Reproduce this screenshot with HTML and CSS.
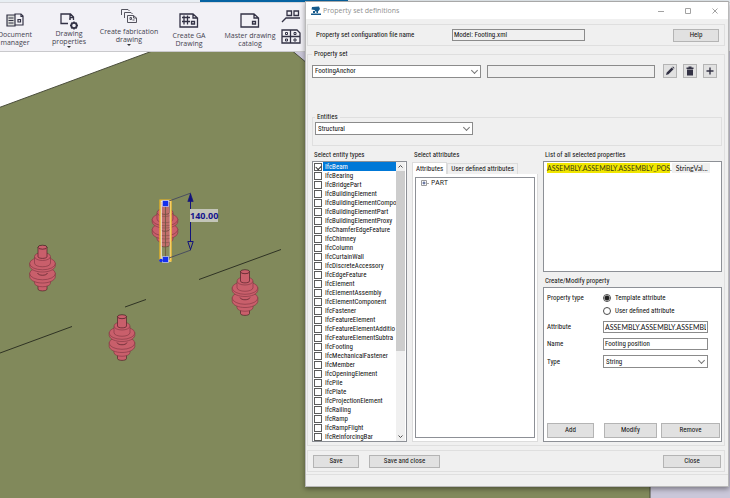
FILE: index.html
```html
<!DOCTYPE html>
<html lang="en">
<head>
<meta charset="utf-8">
<title>Property set definitions</title>
<link rel="stylesheet" href="styles.css">
</head>
<body>
<header class="ribbon">
  <div class="tabstrip"><span class="tab-active"></span></div>
  <nav class="tools">
    <button class="tool tool-doc">
      <svg width="18" height="14" viewBox="0 0 18 14" fill="none" stroke="#333245" stroke-width="1.2"><path d="M9 2V1h6l2 2v9H9"/><path d="M1 2h8v11H1z" fill="#d9dad8"/><path d="M2.500 5h5M2.500 7.500h5M2.500 10h5M15 1v2.500h2"/><path d="M12 6.500h2.500v2.500H12z"/></svg>
      <span>Document<br>manager</span>
    </button>
    <button class="tool tool-props">
      <svg width="20" height="17" viewBox="0 0 20 17" fill="none" stroke="#333245" stroke-width="1.300"><path d="M9 10.500H2V1h9.500l3 3v3M11 1v3.500h3.500"/><path d="M10 6h2"/><circle cx="15" cy="12.500" r="2.700" stroke-width="1.800"/><path d="M15 8.500v1.500M15 15v1.500M11 12.500h1.500M17.500 12.500H19M12.200 9.700l1 1M16.800 14.300l1 1M17.800 9.700l-1 1M13.200 14.300l-1 1" stroke-width="1.500"/></svg>
      <span>Drawing<br>properties</span><i class="caret"></i>
    </button>
    <button class="tool tool-fab">
      <svg width="18" height="16" viewBox="0 0 18 16" fill="none" stroke="#55545f" stroke-width="1"><path d="M1.500 7V1.500H8l1.500 1.500"/><path d="M4.500 10V4.500H11l1.500 1.500"/><path d="M7.500 7.500h6l3 2.500v4.500h-9z"/><path d="M13.500 7.500V10h3M10 9.500h1.500v2H10z"/><path d="M12.500 12h2"/></svg>
      <span>Create fabrication<br>drawing</span><i class="caret"></i>
    </button>
    <button class="tool tool-ga">
      <svg width="20" height="15" viewBox="0 0 20 15" fill="none" stroke="#333245" stroke-width="1.300"><path d="M1 1h13l4.500 4v9H1zM14 1v4h4.500"/><path d="M5 2.500v9M8.500 2.500v9M3 4.500h8M3 8.500h8M12.500 8.500h3V11h-3z"/></svg>
      <span>Create GA<br>Drawing</span>
    </button>
    <button class="tool tool-master">
      <svg width="20" height="15" viewBox="0 0 20 15" fill="none" stroke="#333245" stroke-width="1.300"><path d="M1 1h13l4.500 4v9H1zM14 1v4h4.500M12.500 8.500h3V11h-3z"/></svg>
      <span>Master drawing<br>catalog</span>
    </button>
    <button class="tool tool-more" aria-label="Layouts">
      <svg width="20" height="36" viewBox="0 0 20 36" fill="none" stroke="#333245" stroke-width="1.300"><path d="M6 2h4.500v4.500H6zM13 2h4.500v4.500H13zM1 13l4-4h14M1 21h8.500v6.500H1zM9.500 21H16l3 3v3.500H9.500zM1 27.500h8.500V34H1zM9.500 27.500H19V34H9.500z"/><path d="M4.500 23.500h2v2h-2zM13 23.500h2v2h-2zM4.500 30h2v2h-2zM13 30h2v2h-2z" stroke-width="1"/></svg>
    </button>
  </nav>
</header>
<main class="model">
  <svg class="scene" viewBox="0 52 730 446" preserveAspectRatio="xMinYMin slice">
    <defs>
      <g id="bolt" fill="#c95f6b" stroke="#7c343f" stroke-width=".6">
        <path d="M-4.500 17v4c0 2.500 9 2.500 9 0v-4z" stroke="#40181e"/>
        <path d="M-8 11v4c0 5 16 5 16 0v-4z"/>
        <path d="M-12.800 5v4c1.500 8 24 8 25.600 0V5z"/>
        <ellipse cy="5.500" rx="12.800" ry="6.300"/>
        <path d="M-5 5c1 3 9 3 10 0" stroke="#40181e"/>
        <path d="M-12.800-5v3c1.500 8 24 8 25.600 0v-3z"/>
        <ellipse cy="-4.500" rx="12.800" ry="6.300"/>
        <path d="M-8-11v6c0 5 16 5 16 0v-6z"/>
        <ellipse cy="-11.500" rx="8" ry="4"/>
        <path d="M-4.500-21v9.500c0 2.500 9 2.500 9 0V-21z" stroke="#40181e"/>
        <ellipse cy="-20.800" rx="4.500" ry="2" stroke="#2d1015"/>
      </g>
    </defs>
    <path d="M0 52h730v446H0z" fill="#fff"/>
    <path d="M293 52h437v446H650z" fill="#cac7d9"/>
    <path d="M-2 108L151 51.500h142L650 348v152H-2z" fill="#81895b" stroke="#4b4e3c"/>
    <path d="M0 353l72-26.500M125 307l21-7.500M199 279.500l82-30" stroke="#2f3324" fill="none"/>
    <use href="#bolt" x="42.500" y="268"/>
    <use href="#bolt" x="122" y="337.500"/>
    <use href="#bolt" x="245" y="292.500"/>
    <use href="#bolt" x="165" y="224"/>
    <path d="M161 201h9.500v60H161z" fill="#a5a06a" fill-opacity=".25" stroke="#f8f2dc" stroke-width="1.500"/>
    <path d="M160 200h11v61h-11z" fill="none" stroke="#f5b81c" stroke-width="1.200"/>
    <path d="M165.500 206v51" stroke="#6c553f" stroke-width=".8"/>
    <path d="M162.500 200.500h6v6h-6zM162.500 256.500h6v6h-6z" fill="#1430ee" stroke="#dfe4ff" stroke-width=".6"/>
    <circle cx="161" cy="260.500" r="1.800" fill="#1430ee"/>
    <path d="M169 201l22-8M169 258l22-8" stroke="#3b3f60" stroke-width=".8"/>
    <path d="M190.500 194v56" stroke="#12127c"/>
    <path d="M190.500 193.500l2.700 8h-5.400z" fill="#12127c" stroke="#12127c" stroke-width=".6"/>
    <path d="M190.500 249.500l2.700-8h-5.400z" fill="#81895b" stroke="#12127c"/>
    <path d="M190 209h28v13h-28z" fill="#c3c5b8"/>
    <text class="dimension" x="190" y="219">140.00</text>
  </svg>
</main>

<section class="dialog" role="dialog" aria-labelledby="dlg-title">
  <header class="titlebar">
    <svg width="11" height="10" viewBox="0 0 11 10" fill="#155a8c"><path d="M1 7.500h10V9H1zM2 1l7-.5L10 3 8 5.500H5.500L4.500 4 1.500 3.500zM3 5h2v2H3zM6.500 5.500h1.500V7H6.500z"/></svg>
    <h1 id="dlg-title">Property set definitions</h1>
    <button class="win" aria-label="Minimize"><svg width="8" height="8" viewBox="0 0 8 8"><path d="M1 4.500h6"/></svg></button>
    <button class="win" aria-label="Maximize"><svg width="8" height="8" viewBox="0 0 8 8"><path d="M1.500 1.500h5v5h-5z"/></svg></button>
    <button class="win" aria-label="Close window"><svg width="8" height="8" viewBox="0 0 8 8"><path d="M1.500 1.500l5 5M6.500 1.500l-5 5"/></svg></button>
  </header>
  <div class="content">
    <div class="frame file-row">
      <label for="cfg">Property set configuration file name</label>
      <input id="cfg" class="field readonly" value="Model: Footing.xml" readonly>
      <button class="btn">Help</button>
    </div>

    <fieldset class="frame property-set">
      <legend>Property set</legend>
      <div class="set-row">
        <div class="select set-name"><select aria-label="Property set"><option>FootingAnchor</option></select></div>
        <input class="field readonly set-desc" aria-label="Description" readonly>
        <div class="set-actions">
          <button class="btn icon" aria-label="Edit"><svg width="10" height="10" viewBox="0 0 10 10" fill="#333245"><path d="M1 9l.7-2.500 5-5L8.500 3.300l-5 5zM7.200 1l.8-.5L9.500 2 9 2.800z"/></svg></button>
          <button class="btn icon" aria-label="Delete"><svg width="10" height="10" viewBox="0 0 10 10" fill="#333245"><path d="M1.500 1.500h2V.5h3v1h2V3h-7zM2 3.500h6V9.500H2z"/></svg></button>
          <button class="btn icon" aria-label="Add set"><svg width="10" height="10" viewBox="0 0 10 10" fill="#333245"><path d="M4.300 1.500h1.400v2.800h2.800v1.400H5.700v2.800H4.300V5.700H1.500V4.300h2.800z"/></svg></button>
        </div>
      </div>
      <fieldset class="frame entities">
        <legend>Entities</legend>
        <div class="select"><select aria-label="Entities"><option>Structural</option></select></div>
      </fieldset>

      <div class="columns">
        <div class="col">
          <h2>Select entity types</h2>
          <div class="box entity-box">
            <ul class="entity-list">
              <li class="selected"><label><input type="checkbox" checked><span>IfcBeam</span></label></li>
              <li><label><input type="checkbox"><span>IfcBearing</span></label></li>
              <li><label><input type="checkbox"><span>IfcBridgePart</span></label></li>
              <li><label><input type="checkbox"><span>IfcBuildingElement</span></label></li>
              <li><label><input type="checkbox"><span>IfcBuildingElementCompo</span></label></li>
              <li><label><input type="checkbox"><span>IfcBuildingElementPart</span></label></li>
              <li><label><input type="checkbox"><span>IfcBuildingElementProxy</span></label></li>
              <li><label><input type="checkbox"><span>IfcChamferEdgeFeature</span></label></li>
              <li><label><input type="checkbox"><span>IfcChimney</span></label></li>
              <li><label><input type="checkbox"><span>IfcColumn</span></label></li>
              <li><label><input type="checkbox"><span>IfcCurtainWall</span></label></li>
              <li><label><input type="checkbox"><span>IfcDiscreteAccessory</span></label></li>
              <li><label><input type="checkbox"><span>IfcEdgeFeature</span></label></li>
              <li><label><input type="checkbox"><span>IfcElement</span></label></li>
              <li><label><input type="checkbox"><span>IfcElementAssembly</span></label></li>
              <li><label><input type="checkbox"><span>IfcElementComponent</span></label></li>
              <li><label><input type="checkbox"><span>IfcFastener</span></label></li>
              <li><label><input type="checkbox"><span>IfcFeatureElement</span></label></li>
              <li><label><input type="checkbox"><span>IfcFeatureElementAdditio</span></label></li>
              <li><label><input type="checkbox"><span>IfcFeatureElementSubtra</span></label></li>
              <li><label><input type="checkbox"><span>IfcFooting</span></label></li>
              <li><label><input type="checkbox"><span>IfcMechanicalFastener</span></label></li>
              <li><label><input type="checkbox"><span>IfcMember</span></label></li>
              <li><label><input type="checkbox"><span>IfcOpeningElement</span></label></li>
              <li><label><input type="checkbox"><span>IfcPile</span></label></li>
              <li><label><input type="checkbox"><span>IfcPlate</span></label></li>
              <li><label><input type="checkbox"><span>IfcProjectionElement</span></label></li>
              <li><label><input type="checkbox"><span>IfcRailing</span></label></li>
              <li><label><input type="checkbox"><span>IfcRamp</span></label></li>
              <li><label><input type="checkbox"><span>IfcRampFlight</span></label></li>
              <li><label><input type="checkbox"><span>IfcReinforcingBar</span></label></li>
            </ul>
            <div class="scrollbar">
              <svg width="9" height="9" viewBox="0 0 9 9"><path d="M2.500 5.500l2-2 2 2"/></svg>
              <span class="thumb"></span>
              <svg width="9" height="9" viewBox="0 0 9 9"><path d="M2.500 3.500l2 2 2-2"/></svg>
            </div>
          </div>
        </div>

        <div class="col">
          <h2>Select attributes</h2>
          <div class="tabs" role="tablist">
            <button class="tab current" role="tab" aria-selected="true">Attributes</button>
            <button class="tab" role="tab" aria-selected="false">User defined attributes</button>
          </div>
          <div class="tab-panel">
            <div class="box tree">
              <svg width="8" height="7" viewBox="0 0 8 7"><path d="M.5.5h5v5h-5z" fill="#fff" stroke="#9a9a9a"/><path d="M1.500 3h3M3 1.500v3" stroke="#3c4f86"/><path d="M6 3.500h2" stroke="#aaa"/></svg>
              <span>PART</span>
            </div>
          </div>
        </div>

        <div class="col">
          <h2>List of all selected properties</h2>
          <div class="box props-box">
            <table class="props"><tr><td><mark>ASSEMBLY.ASSEMBLY.ASSEMBLY_POS</mark>.</td><td>StringVal...</td></tr></table>
          </div>
          <h2 class="second">Create/Modify property</h2>
          <div class="box editor">
            <div class="form">
              <span>Property type</span>
              <label class="radio"><input type="radio" name="ptype" checked>Template attribute</label>
              <label class="radio user"><input type="radio" name="ptype">User defined attribute</label>
              <label for="attr">Attribute</label>
              <input id="attr" class="field path" value="ASSEMBLY.ASSEMBLY.ASSEMBL">
              <label for="name">Name</label>
              <input id="name" class="field" value="Footing position">
              <label for="type">Type</label>
              <div class="select"><select id="type"><option>String</option></select></div>
            </div>
            <div class="editor-actions">
              <button class="btn">Add</button>
              <button class="btn">Modify</button>
              <button class="btn">Remove</button>
            </div>
          </div>
        </div>
      </div>
    </fieldset>

    <div class="frame footer">
      <button class="btn save">Save</button>
      <button class="btn save-close">Save and close</button>
      <button class="btn close">Close</button>
    </div>
  </div>
  <div class="statusbar"></div>
</section>
</body>
</html>
```
FILE: styles.css
```css
* { box-sizing: border-box; }

body {
  margin: 0;
  min-height: 100vh;
  display: flex;
  flex-direction: column;
  position: relative;
  overflow: hidden;
  font: 7px/10px "Roboto Condensed", Lato, "Liberation Sans", sans-serif;
  color: #111;
}

button, input, select { font: inherit; color: inherit; margin: 0; }
h1, h2, ul { margin: 0; padding: 0; font: inherit; list-style: none; }

/* Ribbon */
.ribbon { background: #f2f1f6; border-bottom: 1px solid #c9c9cc; }
.tabstrip { height: 3px; background: #e8eef3; border-bottom: 1px solid #d5d6da; display: flex; }
.tab-active { width: 148px; height: 2px; margin-left: 200px; background: #0663a2; }
.tools { display: flex; height: 48px; }
.tool {
  flex: none;
  display: flex;
  flex-direction: column;
  align-items: center;
  border: 0;
  padding: 10px 0 0;
  background: none;
  font: 7px/8px "Open Sans", "Noto Sans", sans-serif;
  color: #43424f;
  white-space: nowrap;
}
.tool svg { flex: none; }
.tool-doc { width: 46px; margin-left: -8px; }
.tool-doc span, .tool-ga span, .tool-master span { margin-top: 4px; }
.tool-props { width: 62px; }
.tool-fab { width: 58px; padding-top: 5px; }
.tool-fab span { margin-top: 4px; }
.tool-ga { width: 62px; }
.tool-master { width: 60px; }
.tool-more { width: 22px; padding-top: 6px; }
.caret { border: 2px solid transparent; border-top-color: #333; border-bottom: 0; }

/* Model view */
.model { flex: 1; display: flex; min-height: 0; }
.scene { flex: 1; display: block; width: 100%; }
.dimension { font: bold 9px "Open Sans", "Noto Sans", sans-serif; fill: #14148c; }

/* Dialog window */
.dialog {
  position: absolute;
  top: 1px;
  left: 305px;
  right: 1px;
  background: #f0f0f0;
  border: 1px solid #b9b9b9;
  border-top-color: #a8a8a8;
  box-shadow: 0 2px 5px rgba(0, 0, 0, .4);
}
.titlebar { display: flex; align-items: center; height: 17px; padding: 0 0 0 4px; background: #fff; }
.titlebar h1 { flex: 1; margin-left: 2px; font: 7px/10px "Open Sans", sans-serif; color: #8f8f8f; }
.win { width: 27px; padding: 0; border: 0; background: none; display: flex; justify-content: center; }
.win svg { fill: none; stroke: #a2a2a2; }

.content { padding: 5px 3px 0 1px; }
.frame { min-width: 0; margin: 0; padding: 0; border: 1px solid #dfdfdf; }
.file-row { display: flex; align-items: center; height: 22px; padding: 0 5px 0 8px; }
.file-row label { width: 136px; }
.file-row .field { width: 133px; }
.file-row .btn { width: 46px; margin-left: auto; }

.field {
  min-width: 0;
  height: 12px;
  padding: 0 1px;
  border: 1px solid #8b8b8b;
  background: #fff;
  border-radius: 0;
}
.readonly { background: #f0f0f0; }
.path, .props { font-family: Lato, "Liberation Sans", sans-serif; }

.btn {
  height: 13px;
  padding: 0;
  border: 1px solid #b4b4b4;
  background: #e1e1e1;
  line-height: 9px;
  text-align: center;
}
.icon { width: 14px; height: 14px; display: flex; align-items: center; justify-content: center; }

.select { position: relative; display: flex; }
.select select {
  appearance: none;
  width: 100%;
  height: 13px;
  padding: 0 2px;
  border: 1px solid #8b8b8b;
  border-radius: 0;
  background: #fff;
}
.select::after {
  content: "";
  position: absolute;
  right: 4px;
  top: 3px;
  width: 4px;
  height: 4px;
  border: solid #777;
  border-width: 0 1px 1px 0;
  transform: rotate(45deg);
}

legend { padding: 0 2px; margin-left: 0; line-height: 10px; }
.property-set { margin-top: 3px; padding: 5px 2px 3px 4px; }
.set-row { display: flex; align-items: center; gap: 6px; padding-right: 5px; }
.set-name { flex: 0 0 169px; }
.set-desc { flex: 1; height: 13px; }
.set-actions { display: flex; gap: 6px; margin-left: 2px; }

.entities { margin-top: 34px; padding: 0 2px 10px; }
.entities .select { width: 158px; }

.columns { display: grid; grid-template-columns: 95px 126px minmax(0, 1fr); column-gap: 5px; margin-top: 4px; }
.columns h2 { padding: 0 2px; height: 11px; line-height: 11px; }
.box { border: 1px solid #8d9096; background: #fff; }

.entity-box { display: flex; height: 281px; overflow: hidden; padding: 0 1px; }
.entity-list { flex: 1; min-width: 0; overflow: hidden; }
.entity-list label { display: flex; height: 9px; line-height: 10px; white-space: nowrap; }
.entity-list span { flex: 1; padding-left: 2px; }
.entity-list input {
  appearance: none;
  flex: none;
  width: 8px;
  height: 8px;
  margin: 1px 1px 0 0;
  border: 1px solid #5b5b5b;
  background: #fff;
  display: flex;
}
.entity-list input:checked::after {
  content: "";
  width: 5px;
  height: 3px;
  margin: 1px 0 0 1px;
  border: solid #333;
  border-width: 0 0 1px 1px;
  transform: rotate(-45deg);
}
.selected span { background: #0078d7; color: #fff; }
.scrollbar { display: flex; flex-direction: column; width: 9px; background: #f0f0f0; }
.scrollbar svg { fill: none; stroke: #505050; }
.thumb { height: 180px; background: #cdcdcd; margin-bottom: auto; }

.tabs { display: flex; align-items: flex-end; height: 12px; margin-top: 1px; }
.tab { height: 11px; padding: 0 3px; border: 1px solid #dcdcdc; border-bottom: 0; background: #f0f0f0; line-height: 10px; white-space: nowrap; }
.tab.current { height: 12px; background: #fff; }
.tab-panel { height: 268px; padding: 3px 2px 4px; background: #fff; border: 1px solid #dcdcdc; border-top: 0; }
.tree { display: flex; align-items: flex-start; gap: 2px; height: 261px; padding: 0 5px; }
.tree svg { margin-top: 2px; fill: none; }
.tree span { font: 7px/10px "Open Sans", sans-serif; }

.props-box { height: 111px; padding: 1px 3px; overflow: hidden; }
.props { border-collapse: collapse; white-space: nowrap; }
.props td { padding: 0; line-height: 10px; }
.props td + td { padding: 0 2px 0 4px; background: #f0f0f0; }
.props mark { background: #f0e600; color: #3a3a10; display: inline-block; }

.columns .second { margin-top: 4px; }
.editor { display: flex; flex-direction: column; justify-content: space-between; height: 155px; padding: 4px 1px 3px 3px; }
.form { display: grid; grid-template-columns: 50px minmax(0, 1fr); column-gap: 6px; row-gap: 5px; align-items: center; padding-right: 12px; }
.radio { display: flex; align-items: center; gap: 4px; height: 11px; }
.user { grid-column: 2; margin-top: -3px; }
.radio input {
  appearance: none;
  width: 8px;
  height: 8px;
  border: 1px solid #4b4b4b;
  border-radius: 50%;
  background: #fff;
}
.radio input:checked { background: radial-gradient(circle, #222 0 2px, #fff 3px); }
.editor-actions { display: grid; grid-template-columns: 53fr 53fr 59fr; column-gap: 4px; }
.editor-actions .btn { height: 15px; }
.editor-actions .btn:first-child { margin-right: 6px; }

.footer { display: flex; align-items: center; height: 22px; margin-top: 4px; padding: 0 3px 0 5px; }
.save { width: 46px; }
.save-close { width: 71px; margin-left: 10px; }
.close { width: 58px; margin-left: auto; }
.statusbar { height: 12px; margin-top: 2px; border-top: 1px solid #dfdfdf; }
```
